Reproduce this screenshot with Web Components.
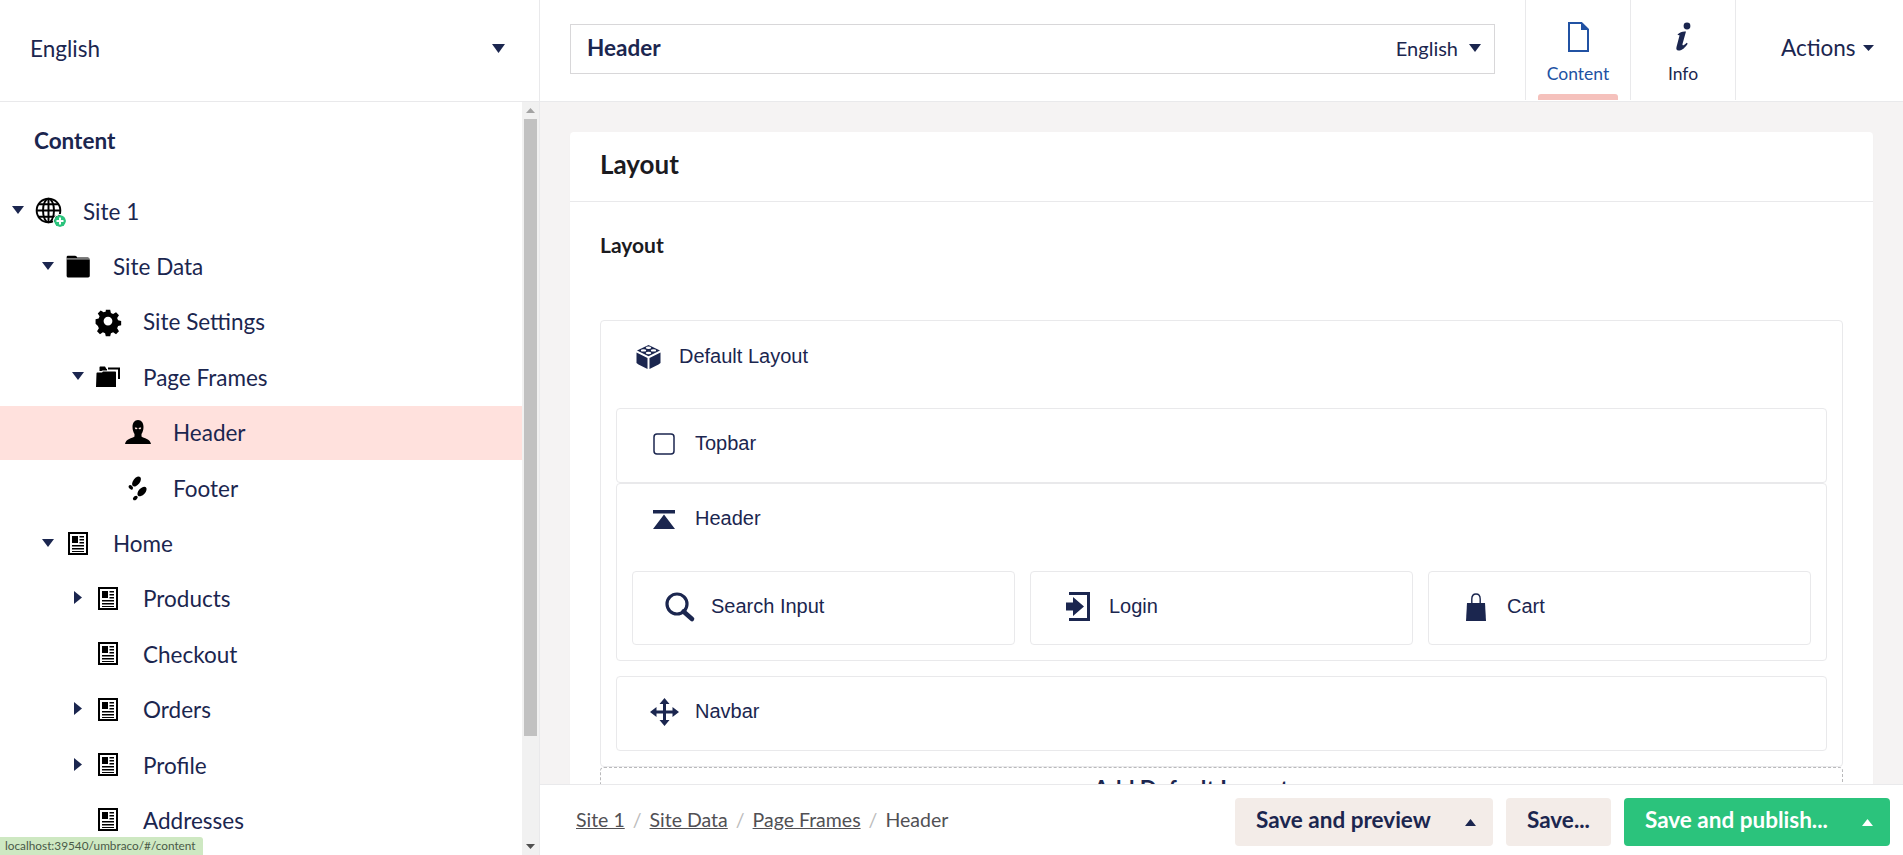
<!DOCTYPE html>
<html>
<head>
<meta charset="utf-8">
<title>Content</title>
<style>
  html, body { margin: 0; height: 100%; overflow: hidden; background: #fff; }
  body { font-family: Lato, "Liberation Sans", sans-serif; color: #1b264f; }
</style>
</head>
<body>
<um-app>
  <um-lang-bar slot="lang" label="English"></um-lang-bar>
  <um-tree slot="tree" title="Content">
    <um-tree-item level="0" caret="down" icon="globe" badge>Site 1</um-tree-item>
    <um-tree-item level="1" caret="down" icon="folder">Site Data</um-tree-item>
    <um-tree-item level="2" icon="gear">Site Settings</um-tree-item>
    <um-tree-item level="2" caret="down" icon="folders">Page Frames</um-tree-item>
    <um-tree-item level="3" icon="burglar" selected>Header</um-tree-item>
    <um-tree-item level="3" icon="footprints">Footer</um-tree-item>
    <um-tree-item level="1" caret="down" icon="news">Home</um-tree-item>
    <um-tree-item level="2" caret="right" icon="news">Products</um-tree-item>
    <um-tree-item level="2" icon="news">Checkout</um-tree-item>
    <um-tree-item level="2" caret="right" icon="news">Orders</um-tree-item>
    <um-tree-item level="2" caret="right" icon="news">Profile</um-tree-item>
    <um-tree-item level="2" icon="news">Addresses</um-tree-item>
  </um-tree>
  <um-editor-header slot="header" name="Header" lang="English">
    <um-tab icon="doc" active>Content</um-tab>
    <um-tab icon="info">Info</um-tab>
  </um-editor-header>
  <um-card slot="main" title="Layout" label="Layout">
    <um-block icon="lego" label="Default Layout" kind="outer">
      <um-block icon="square" label="Topbar"></um-block>
      <um-block icon="top" label="Header" kind="parent">
        <um-block slot="cols" icon="search" label="Search Input" kind="child"></um-block>
        <um-block slot="cols" icon="login" label="Login" kind="child"></um-block>
        <um-block slot="cols" icon="bag" label="Cart" kind="child"></um-block>
      </um-block>
      <um-block icon="move" label="Navbar" style="margin-top:15px"></um-block>
    </um-block>
    <um-add-button>Add Default Layout</um-add-button>
  </um-card>
  <um-footer slot="footer">
    <um-crumbs slot="crumbs" items="Site 1|Site Data|Page Frames|Header"></um-crumbs>
    <um-button w="258" caret>Save and preview</um-button>
    <um-button w="105">Save...</um-button>
    <um-button w="266" caret green>Save and publish...</um-button>
  </um-footer>
</um-app>
<um-status>localhost:39540/umbraco/#/content</um-status>

<script>
// icons are inline svg, w/h is the drawn size and box the viewBox (32x32 if not given)
const ICONS = {
  globe: { w: 27, c: '#000', svg: `<g fill="none" stroke="currentColor" stroke-width="2.3"><circle cx="16" cy="16" r="14"/><ellipse cx="16" cy="16" rx="6.5" ry="14"/><path d="M16 2v28M2.5 16h27M4.5 8.5h23M4.5 23.5h23"/></g>` },
  folder: { w: 26, c: '#000', svg: `<path d="M2 5.5C2 4 3 3.500 4 3.500h8.500c1 0 2 1 2.500 2h13c1.500 0 2.500 1 2.500 2.500v20c0 1.500-1 2-2 2H3.500C2.500 30 2 29 2 28zM2 8h29" fill="currentColor"/><path d="M2 7.300h29" stroke="#fff" stroke-width="1"/>` },
  gear: { w: 26, c: '#000', svg: `<path fill-rule="evenodd" d="M13 1h6l1 4.500 3 1.300 4-2.500 4 4-2.500 4 1.300 3 4.200 1v6l-4.200 1-1.300 3 2.500 4-4 4-4-2.500-3 1.300-1 4.200h-6l-1-4.200-3-1.300-4 2.500-4-4 2.500-4-1.300-3L-1 20v-6l4.200-1 1.300-3-2.500-4 4-4 4 2.500 3-1.300zM16 10.500a6 6 0 1 0 0 12 6 6 0 0 0 0-12z" transform="translate(1.600 1.300) scale(.9)" fill="currentColor"/>` },
  folders: { w: 24, h: 21, c: '#000', box: '0 0 24 21', svg: `<path d="M12 1.500H24V13h-2V3.500H12z" fill="currentColor"/><path d="M3.500 5V1.500c0-.6.4-1 1-1H9l1.500 2.500h.5v1.500H6.500L5.500 5z" fill="currentColor"/><path d="M.5 7.500c0-.6.4-1 1-1H6l1-1h12c.6 0 1 .4 1 1V21H0z" fill="currentColor"/>` },
  burglar: { w: 26, h: 24, c: '#000', box: '0 0 26 24', svg: `<path fill-rule="evenodd" d="M13 0c3.500 0 5.500 3 5.500 7 0 3-1 5.500-2 7v2.500c2.500 2 8.500 2 9.500 7.500H0c1-5.500 7-5.500 9.500-7.500V14c-1-1.500-2-4-2-7 0-4 2-7 5.500-7zM9.800 7.800c0 1 .8 1.700 1.700 1.500.6-.1 1-.5 1-1.200-.8-.6-2-.8-2.700-.3zm6.400 0c-.7-.5-1.900-.3-2.700.3 0 .7.400 1.100 1 1.200.9.200 1.700-.5 1.700-1.500z" fill="currentColor"/>` },
  footprints: { w: 20, h: 24, c: '#000', box: '0 0 20 24', svg: `<g fill="currentColor"><ellipse cx="8.500" cy="5.500" rx="3.300" ry="5.800" transform="rotate(38 8.500 5.500)"/><ellipse cx="2.800" cy="11.300" rx="2.600" ry="1.800" transform="rotate(45 2.800 11.300)"/><ellipse cx="14" cy="15.500" rx="3.300" ry="5.800" transform="rotate(42 14 15.500)"/><ellipse cx="7.300" cy="22" rx="2.700" ry="1.800" transform="rotate(-40 7.300 22)"/></g>` },
  news: { w: 20, h: 23, c: '#000', box: '0 0 20 23', svg: `<rect x="1" y="1" width="18" height="21" fill="#fff" stroke="currentColor" stroke-width="2"/><path fill="currentColor" d="M4 4h6v7H4zM11.500 4H16v1.500h-4.500zM11.500 7H16v1.500h-4.500zM11.500 10H16v1.500h-4.500zM4 13h12v1.500H4zM4 16h12v1.500H4zM4 19h12v1H4z"/>` },
  doc: { w: 21, h: 30, c: 'currentColor', box: '0 0 21 30', svg: `<path d="M1 1h12.500L20 7.500V29H1z" fill="#fff" stroke="currentColor" stroke-width="2"/><path d="M13 1v7h7z" fill="currentColor"/>` },
  info: { w: 15, h: 29, c: 'currentColor', box: '0 0 15 29', svg: `<circle cx="11" cy="4" r="3.400" fill="currentColor"/><path fill="currentColor" d="M1.500 12.500C4 10 7 9 10 9.500L6.500 22c-.3 1.300.7 1.500 1.500 1 .9-.5 1.800-1.300 2.700-2.300l1 1C9.500 25 6.500 28.500 2.500 28.500c-2 0-2.500-1.500-2-3.500L3.400 14c.2-1-.6-1.200-1.200-.8z"/>` },
  lego: { w: 25, h: 24, c: 'currentColor', box: '0 0 25 24', svg: `<path fill="currentColor" d="M12.500 0L24 5.500l-11.500 5.800L1 5.500z"/><g fill="#fff"><ellipse cx="12.500" cy="2.800" rx="2.700" ry="1.200"/><ellipse cx="7.500" cy="5.400" rx="2.700" ry="1.200"/><ellipse cx="17.500" cy="5.400" rx="2.700" ry="1.200"/><ellipse cx="12.500" cy="8" rx="2.700" ry="1.200"/></g><path fill="currentColor" d="M.5 7.500l11 5.500v11l-9-4.500-2-1.500zM24.500 7.500l-11 5.500v11l9-4.500 2-1.500z"/>` },
  square: { w: 22, h: 22, c: 'currentColor', box: '0 0 22 22', svg: `<rect x="1" y="1" width="20" height="20" rx="3" fill="none" stroke="currentColor" stroke-width="1.500"/>` },
  top: { w: 22, h: 19, c: 'currentColor', box: '0 0 22 19', svg: `<path fill="currentColor" d="M0 0h22v3.400H0zM11 4.500L22 19H0z"/>` },
  search: { w: 30, h: 29, c: 'currentColor', box: '0 0 30 29', svg: `<circle cx="12" cy="12" r="10" fill="none" stroke="currentColor" stroke-width="3.200"/><path d="M18.500 19.500L27 27" stroke="currentColor" stroke-width="4.600" stroke-linecap="round"/>` },
  login: { w: 24, h: 29, c: 'currentColor', box: '0 0 24 29', svg: `<path fill="currentColor" d="M3 0h21v29H3v-3h18V3H3zM0 10.500h7V5l11 9.500L7 24v-5.500H0z"/>` },
  bag: { w: 20, h: 28, c: 'currentColor', box: '0 0 20 28', svg: `<path d="M5.800 11V6c0-3 1.800-5 4.200-5s4.200 2 4.200 5v5" fill="none" stroke="currentColor" stroke-width="1.400"/><path fill="currentColor" d="M1 10h18l1 18H0z"/>` },
  move: { w: 29, h: 28, c: 'currentColor', box: '0 0 29 28', svg: `<path fill="currentColor" d="M14.500 0l5 6h-3.500v6.500h6.500V9l6.500 5-6.500 5v-3.500H16V22h3.500l-5 6-5-6H13v-6.500H6.500V19L0 14l6.500-5v3.500H13V6H9.500z"/>` },
};

function iconMarkup(name) {
  const i = ICONS[name];
  const w = i.w, h = i.h || i.w;
  return `<svg xmlns="http://www.w3.org/2000/svg" width="${w}" height="${h}" viewBox="${i.box || '0 0 32 32'}" style="color:${i.c};display:block;overflow:visible">${i.svg}</svg>`;
}

function caretMarkup(dir, w, h) {
  const p = { down: `0,0 ${w},0 ${w / 2},${h}`, up: `0,${h} ${w},${h} ${w / 2},0`, right: `0,0 ${w},${h / 2} 0,${h}` }[dir];
  return `<svg width="${w}" height="${h}" viewBox="0 0 ${w} ${h}" style="display:block"><polygon points="${p}" fill="currentColor"/></svg>`;
}

class UmElement extends HTMLElement {
  constructor() {
    super();
    this.attachShadow({ mode: 'open' });
  }
}

class UmApp extends UmElement {
  connectedCallback() {
    this.shadowRoot.innerHTML = `
    <style>
      :host { display: grid; grid-template-columns: 540px 1fr; grid-template-rows: 102px 1fr; height: 100vh; width: 100vw; }
      .right { display: flex; flex-direction: column; min-height: 0; min-width: 0; grid-row: 1 / 3; grid-column: 2; }
      .main { flex: 1; min-height: 0; overflow: hidden; background: #f5f3f3; padding: 30px 30px 0; }
      .left-top { grid-column: 1; grid-row: 1; }
      .left-tree { grid-column: 1; grid-row: 2; min-height: 0; }
    </style>
    <div class="left-top"><slot name="lang"></slot></div>
    <div class="left-tree"><slot name="tree"></slot></div>
    <div class="right">
      <slot name="header"></slot>
      <div class="main"><slot name="main"></slot></div>
      <slot name="footer"></slot>
    </div>`;
  }
}

class UmLangBar extends UmElement {
  connectedCallback() {
    this.shadowRoot.innerHTML = `
    <style>
      :host { display: flex; align-items: center; justify-content: space-between; box-sizing: border-box;
        border-bottom: 1px solid #e9e9eb; border-right: 1px solid #e9e9eb; padding: 0 34px 5px 30px; width: 540px; height: 102px; font-size: 22.500px; }
    </style>
    <span>${this.getAttribute('label')}</span>${caretMarkup('down', 13, 9)}`;
  }
}

class UmTree extends UmElement {
  connectedCallback() {
    this.shadowRoot.innerHTML = `
    <style>
      :host { display: flex; height: 100%; border-right: 1px solid #e9e9eb; box-sizing: content-box; width: 539px; overflow: hidden; }
      .list { flex: 1; min-width: 0; padding-top: 82px; position: relative; overflow: hidden; }
      h5 { position: absolute; left: 34px; top: 24px; margin: 0; font-size: 22.500px; line-height: 30px; font-weight: 700; }
      .bar { width: 17px; background: #f1f1f1; display: flex; flex-direction: column; align-items: center; color: #a3a3a3; flex: none; }
      .arrow { height: 17px; display: flex; align-items: center; justify-content: center; flex: none; }
      .thumb { width: 13px; height: 617px; background: #c1c1c1; flex: none; }
      .rest { flex: 1; }
    </style>
    <div class="list"><h5>${this.getAttribute('title')}</h5><slot></slot></div>
    <div class="bar">
      <div class="arrow">${caretMarkup('up', 9, 5)}</div>
      <div class="thumb"></div>
      <div class="rest"></div>
      <div class="arrow" style="color:#505050">${caretMarkup('down', 9, 5)}</div>
    </div>`;
  }
}

class UmTreeItem extends UmElement {
  connectedCallback() {
    const level = Number(this.getAttribute('level') || 0);
    const caret = this.getAttribute('caret');
    const icon = this.getAttribute('icon');
    const badge = this.hasAttribute('badge')
      ? `<svg class="badge" width="12" height="12" viewBox="0 0 12 12"><circle cx="6" cy="6" r="6" fill="#2bc37c"/><path d="M6 2.500v7M2.500 6h7" stroke="#fff" stroke-width="2"/></svg>` : '';
    this.shadowRoot.innerHTML = `
    <style>
      :host { display: block; height: 55.400px; font-size: 22.500px; }
      :host([selected]) .row { background: #ffe1dd; }
      .row { display: flex; align-items: center; height: calc(100% - 1px); padding-left: ${level * 30}px; box-sizing: border-box; }
      .caret { width: 35px; flex: none; display: flex; justify-content: center; margin-top: -2px; }
      .icon { width: 26px; flex: none; display: flex; justify-content: center; position: relative; margin-top: -1px; }
      .badge { position: absolute; right: -5px; bottom: -3px; border-radius: 50%; box-shadow: 0 0 0 1px #fff; }
      .label { margin-left: 22px; white-space: nowrap; }
    </style>
    <div class="row">
      <div class="caret">${caret ? caretMarkup(caret === 'right' ? 'right' : 'down', caret === 'right' ? 8 : 12, caret === 'right' ? 13 : 8) : ''}</div>
      <div class="icon">${iconMarkup(icon)}${badge}</div>
      <span class="label"><slot></slot></span>
    </div>`;
  }
}

class UmEditorHeader extends UmElement {
  connectedCallback() {
    this.shadowRoot.innerHTML = `
    <style>
      :host { display: flex; height: 101px; border-bottom: 1px solid #e9e9eb; background: #fff; box-sizing: content-box; flex: none; }
      .name-wrap { flex: none; padding: 24px 30px 0; box-sizing: content-box; width: 925px; }
      .name { height: 50px; border: 1px solid #d8d7d9; box-sizing: border-box; display: flex; align-items: center; justify-content: space-between; padding: 0 13px 3px 16px; font-size: 22.500px; }
      b { font-weight: 700; }
      .lang { display: flex; align-items: center; gap: 11px; font-size: 20px; }
      .tabs { display: flex; flex: none; }
      .actions { flex: 1; border-left: 1px solid #e9e9eb; height: 100px; display: flex; align-items: center; gap: 7px; padding: 0 0 5px 45px; font-size: 22.500px; box-sizing: border-box; }
    </style>
    <div class="name-wrap"><div class="name"><b>${this.getAttribute('name')}</b>
      <span class="lang">${this.getAttribute('lang')}${caretMarkup('down', 12, 8)}</span></div></div>
    <div class="tabs"><slot></slot></div>
    <div class="actions">Actions ${caretMarkup('down', 11, 6)}</div>`;
  }
}

class UmTab extends UmElement {
  connectedCallback() {
    this.shadowRoot.innerHTML = `
    <style>
      :host { display: flex; flex-direction: column; align-items: center; width: 105px; height: 100px; box-sizing: border-box; border-left: 1px solid #e9e9eb; position: relative; padding-top: 22px; font-size: 17.500px; }
      :host([active]) { color: #2152a3; }
      :host([active])::after { content: ""; position: absolute; left: 12px; bottom: 0; width: 80px; height: 6px; background: #f5c1bc; border-radius: 3px 3px 0 0; }
      .ic { height: 30px; display: flex; justify-content: center; }
      .tx { margin-top: 10px; line-height: 24px; }
    </style>
    <div class="ic">${iconMarkup(this.getAttribute('icon'))}</div>
    <div class="tx"><slot></slot></div>`;
  }
}

class UmCard extends UmElement {
  connectedCallback() {
    this.shadowRoot.innerHTML = `
    <style>
      :host { display: block; background: #fff; border-radius: 4px 4px 0 0; height: 100%; box-shadow: 0 1px 1px rgba(0,0,0,.06); }
      .head { height: 69px; box-sizing: content-box; border-bottom: 1px solid #e9e9eb; display: flex; align-items: center; padding: 0 30px; font-size: 26px; font-weight: 700; color: #1b1b1f; }
      .head span { margin-bottom: 6px; }
      .body { padding: 30px 30px 0; }
      .label { line-height: 26px; font-weight: 700; color: #1b1b1f; margin-bottom: 62px; font-size: 21px; }
    </style>
    <div class="head"><span>${this.getAttribute('title')}</span></div>
    <div class="body">
      <div class="label">${this.getAttribute('label')}</div>
      <slot></slot>
    </div>`;
  }
}

class UmBlock extends UmElement {
  connectedCallback() {
    const kind = this.getAttribute('kind') || '';
    const head = { outer: 70, parent: 69, child: 68, '': 69 }[kind];
    this.shadowRoot.innerHTML = `
    <style>
      :host { display: block; border: 1px solid #e9e9eb; border-radius: 4px; background: #fff; font: 20px "Liberation Sans", Arial, sans-serif; box-sizing: border-box; }
      :host([kind=outer]) { padding-bottom: 15px; }
      :host([kind=child]) { flex: 1; height: 74px; min-width: 0; }
      :host(:not([kind])) { height: 75px; }
      .head { height: ${head}px; display: flex; align-items: center; padding-left: 31px; }
      .ic { width: 32px; flex: none; display: flex; justify-content: center; margin-top: 1px; }
      .tx { margin-left: 15px; }
      .inner { padding: ${kind === 'outer' ? '17px' : '0'} 15px 0; }
      .cols { display: ${kind === 'parent' ? 'flex' : 'none'}; gap: 15px; padding: 18px 15px 15px; }
    </style>
    <div class="head"><div class="ic">${iconMarkup(this.getAttribute('icon'))}</div><span class="tx">${this.getAttribute('label')}</span></div>
    ${kind === 'outer' ? '<div class="inner"><slot></slot></div>' : ''}
    <div class="cols"><slot name="cols"></slot></div>`;
  }
}

class UmAddButton extends UmElement {
  connectedCallback() {
    this.shadowRoot.innerHTML = `
    <style>
      :host { display: block; border: 1px dashed #b9b9bb; border-radius: 4px; height: 75px; font-size: 22.500px; font-weight: 700; text-align: center; padding: 7px 61px 0 0; box-sizing: border-box; }
    </style>
    <slot></slot>`;
  }
}

class UmFooter extends UmElement {
  connectedCallback() {
    this.shadowRoot.innerHTML = `
    <style>
      :host { display: flex; flex: none; align-items: flex-start; height: 71px; background: #fff; border-top: 1px solid #e9e9eb; box-sizing: border-box; padding: 13px 13px 0 36px; gap: 13px; position: relative; z-index: 1; }
      .crumbs { flex: 1; min-width: 0; }
    </style>
    <div class="crumbs"><slot name="crumbs"></slot></div>
    <slot></slot>`;
  }
}

class UmCrumbs extends UmElement {
  connectedCallback() {
    const items = this.getAttribute('items').split('|');
    const html = items.map((t, n) => n < items.length - 1 ? `<a>${t}</a><i>/</i>` : `<span>${t}</span>`).join('');
    this.shadowRoot.innerHTML = `
    <style>
      :host { display: flex; height: 42px; align-items: center; font-size: 19.500px; color: #515054; }
      a { text-decoration: underline; }
      i { font-style: normal; color: #bbb; margin: 0 8px; }
    </style>${html}`;
  }
}

class UmButton extends UmElement {
  connectedCallback() {
    const caret = this.hasAttribute('caret');
    this.shadowRoot.innerHTML = `
    <style>
      :host { display: flex; align-items: center; height: 48px; width: ${this.getAttribute('w')}px; flex: none; box-sizing: border-box; padding: 0 21px; background: #f3ece8; border-radius: 4px; font-size: 22.500px; font-weight: 700; color: #1b264f; white-space: nowrap; }
      :host([green]) { background: #2bc37c; color: #fff; }
      .tx { flex: 1; padding-bottom: 6px; }
      svg { margin-right: -4px; }
    </style>
    <span class="tx"><slot></slot></span>${caret ? caretMarkup('up', 11, 7) : ''}`;
  }
}

class UmStatus extends UmElement {
  connectedCallback() {
    this.shadowRoot.innerHTML = `
    <style>
      :host { position: fixed; left: 0; bottom: 0; height: 18px; width: 203px; box-sizing: border-box; background: #cee8c2; border-top-right-radius: 3px; padding-left: 5px; font: 11.800px/18px Lato, sans-serif; color: #4a5a48; white-space: nowrap; z-index: 5; }
    </style>
    <slot></slot>`;
  }
}

customElements.define('um-app', UmApp);
customElements.define('um-lang-bar', UmLangBar);
customElements.define('um-tree', UmTree);
customElements.define('um-tree-item', UmTreeItem);
customElements.define('um-editor-header', UmEditorHeader);
customElements.define('um-tab', UmTab);
customElements.define('um-card', UmCard);
customElements.define('um-block', UmBlock);
customElements.define('um-add-button', UmAddButton);
customElements.define('um-footer', UmFooter);
customElements.define('um-crumbs', UmCrumbs);
customElements.define('um-button', UmButton);
customElements.define('um-status', UmStatus);
</script>
</body>
</html>
